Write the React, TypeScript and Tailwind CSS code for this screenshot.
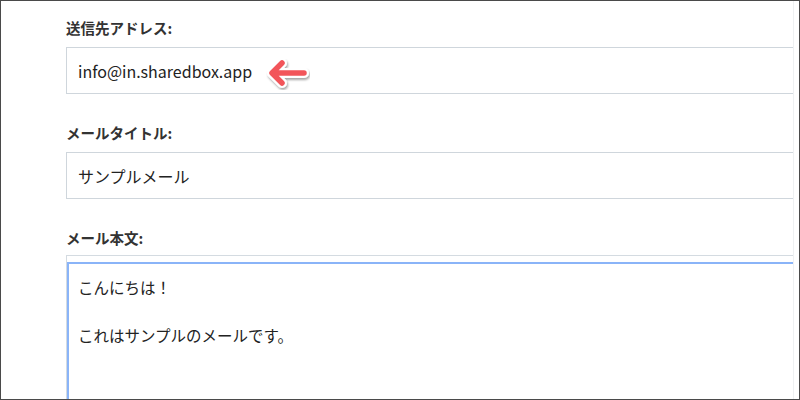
const font = "font-['Noto_Sans_CJK_JP','Noto_Sans',sans-serif]";

function Arrow() {
  return (
    <svg width="46" height="34" viewBox="0 0 46 34" className="absolute left-[263px] top-[55px]">
      <defs>
        <filter id="sh" x="-20%" y="-20%" width="150%" height="160%">
          <feDropShadow dx="1" dy="2" stdDeviation="1.2" floodColor="#000" floodOpacity="0.35" />
        </filter>
      </defs>
      <g filter="url(#sh)" fill="none" strokeLinecap="round" strokeLinejoin="round">
        <path d="M40 17 H9 M18 7 L8 17 L18 27" stroke="#fff" strokeWidth="10" />
        <path d="M40 17 H9 M18 7 L8 17 L18 27" stroke="#f2545a" strokeWidth="5.5" />
      </g>
    </svg>
  );
}

function Field({ label, value }: { label: string; value: string }) {
  return (
    <div className="flex flex-col">
      <label className="h-[20px] text-[14.5px] leading-[20px] font-bold text-[#333]">{label}</label>
      <div className="mt-[9px] flex h-[47px] items-center border border-[#cfd6dc] bg-white pl-[11px] text-[16px] text-[#222]">
        {value}
      </div>
    </div>
  );
}

export default function App() {
  return (
    <div className={`relative h-[400px] w-[800px] overflow-hidden border border-[#4a4a4a] bg-white ${font}`}>
      <div className="absolute right-[5px] top-0 h-full w-px bg-[#eef0f2]" />
      <div className="flex flex-col gap-[29px] pl-[65px] pr-[5px] pt-[17px]">
        <Field label="送信先アドレス:" value="info@in.sharedbox.app" />
        <Field label="メールタイトル:" value="サンプルメール" />
        <div className="flex flex-col">
          <label className="h-[20px] text-[14.5px] leading-[20px] font-bold text-[#333]">メール本文:</label>
          <div className="mt-[7px] border-l border-t border-[#d4dbe1] pt-[6px]">
            <div className="h-[200px] border-l-2 border-t-2 border-[#8ab4f8] pl-[9px] pt-[11px] text-[15.5px] leading-[24px] text-[#222]">
              <p>こんにちは！</p>
              <p>&nbsp;</p>
              <p>これはサンプルのメールです。</p>
            </div>
          </div>
        </div>
      </div>
      <Arrow />
    </div>
  );
}
